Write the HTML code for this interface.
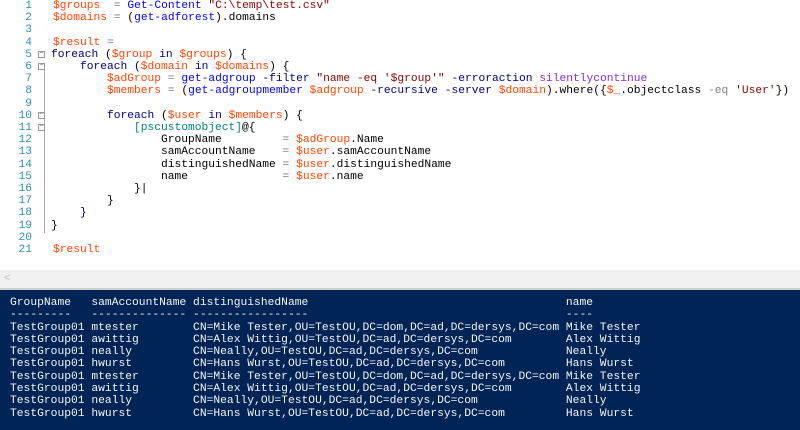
<!DOCTYPE html><html><head><style>
body{margin:0;width:800px;height:430px;overflow:hidden;background:#fff;font-family:"Liberation Mono",monospace;}
#ed{position:absolute;left:0;top:0;width:800px;height:268px;}
.l{position:absolute;left:0;height:12.2px;line-height:12.2px;font-size:11.25px;white-space:pre;}
.n{position:absolute;width:32px;text-align:right;color:#2b91af;}
.c{position:absolute;left:53px;color:#000;}
.v{color:#ff4500}.k{color:#00008b}.m{color:#0000ff}.s{color:#8b0000}.o{color:#808080}.t{color:#008080}.p{color:#000080}.a{color:#8a2be2}
#sb{position:absolute;left:0;top:270px;width:800px;height:18px;background:#f0f0f0;border-bottom:2px solid #cfcfcf;color:#c0c0c0;font:11px "Liberation Sans",sans-serif;}
#con{position:absolute;left:0;top:290px;width:800px;height:140px;background:#012456;color:#f5f5f5;font-size:11.3px;line-height:12.3px;white-space:pre;padding:7px 0 0 10px;box-sizing:border-box;}
.fold{position:absolute;left:38px;width:7px;height:7px;border:1px solid #999;box-sizing:border-box;font-size:7px;line-height:5px;text-align:center;color:#666;}
</style></head><body>
<div id="ed">
<div style="position:absolute;left:44px;top:66px;width:1px;height:167px;background:#aaa"></div>
<div class="l" style="top:0"><span class="n">1</span><span class="c"><span class="v">$groups</span>  <span class="o">=</span> <span class="m">Get-Content</span> <span class="s">"C:\temp\test.csv"</span></span></div>
<div class="l" style="top:12.2px"><span class="n">2</span><span class="c"><span class="v">$domains</span> <span class="o">=</span> (<span class="m">get-adforest</span>).domains</span></div>
<div class="l" style="top:24.4px"><span class="n">3</span></div>
<div class="l" style="top:36.6px"><span class="n">4</span><span class="c"><span class="v">$result</span> <span class="o">=</span></span></div>
<div class="l" style="top:48.8px"><span class="n">5</span><span class="c" style="left:51px"><span class="k">foreach</span> (<span class="v">$group</span> <span class="k">in</span> <span class="v">$groups</span>) {</span></div>
<div class="l" style="top:61px"><span class="n">6</span><span class="c">    <span class="k">foreach</span> (<span class="v">$domain</span> <span class="k">in</span> <span class="v">$domains</span>) {</span></div>
<div class="l" style="top:73.2px"><span class="n">7</span><span class="c">        <span class="v">$adGroup</span> <span class="o">=</span> <span class="m">get-adgroup</span> <span class="p">-filter</span> <span class="s">"name -eq '$group'"</span> <span class="p">-erroraction</span> <span class="a">silentlycontinue</span></span></div>
<div class="l" style="top:85.4px"><span class="n">8</span><span class="c">        <span class="v">$members</span> <span class="o">=</span> (<span class="m">get-adgroupmember</span> <span class="v">$adgroup</span> <span class="p">-recursive</span> <span class="p">-server</span> <span class="v">$domain</span>).where({<span class="v">$_</span>.objectclass <span class="o">-eq</span> <span class="s">'User'</span>})</span></div>
<div class="l" style="top:97.6px"><span class="n">9</span></div>
<div class="l" style="top:109.8px"><span class="n">10</span><span class="c">        <span class="k">foreach</span> (<span class="v">$user</span> <span class="k">in</span> <span class="v">$members</span>) {</span></div>
<div class="l" style="top:122px"><span class="n">11</span><span class="c">            <span class="t">[pscustomobject]</span>@{</span></div>
<div class="l" style="top:134.2px"><span class="n">12</span><span class="c">                GroupName         <span class="o">=</span> <span class="v">$adGroup</span>.Name</span></div>
<div class="l" style="top:146.4px"><span class="n">13</span><span class="c">                samAccountName    <span class="o">=</span> <span class="v">$user</span>.samAccountName</span></div>
<div class="l" style="top:158.6px"><span class="n">14</span><span class="c">                distinguishedName <span class="o">=</span> <span class="v">$user</span>.distinguishedName</span></div>
<div class="l" style="top:170.8px"><span class="n">15</span><span class="c">                name              <span class="o">=</span> <span class="v">$user</span>.name</span></div>
<div class="l" style="top:183px"><span class="n">16</span><span class="c">            }|</span></div>
<div class="l" style="top:195.2px"><span class="n">17</span><span class="c">        }</span></div>
<div class="l" style="top:207.4px"><span class="n">18</span><span class="c">    <span class="k">}</span></span></div>
<div class="l" style="top:219.6px"><span class="n">19</span><span class="c" style="left:51px">}</span></div>
<div class="l" style="top:231.8px"><span class="n">20</span></div>
<div class="l" style="top:244px"><span class="n">21</span><span class="c"><span class="v">$result</span></span></div>
<div class="fold" style="top:51px">−</div><div class="fold" style="top:63px">−</div><div class="fold" style="top:112px">−</div><div class="fold" style="top:124px">−</div>
</div>
<div id="sb"><span style="position:absolute;left:4px;top:2px">&lt;</span></div>
<div id="con">GroupName   samAccountName distinguishedName                                      name
---------   -------------- -----------------                                      ----
TestGroup01 mtester        CN=Mike Tester,OU=TestOU,DC=dom,DC=ad,DC=dersys,DC=com Mike Tester
TestGroup01 awittig        CN=Alex Wittig,OU=TestOU,DC=ad,DC=dersys,DC=com        Alex Wittig
TestGroup01 neally         CN=Neally,OU=TestOU,DC=ad,DC=dersys,DC=com             Neally
TestGroup01 hwurst         CN=Hans Wurst,OU=TestOU,DC=ad,DC=dersys,DC=com         Hans Wurst
TestGroup01 mtester        CN=Mike Tester,OU=TestOU,DC=dom,DC=ad,DC=dersys,DC=com Mike Tester
TestGroup01 awittig        CN=Alex Wittig,OU=TestOU,DC=ad,DC=dersys,DC=com        Alex Wittig
TestGroup01 neally         CN=Neally,OU=TestOU,DC=ad,DC=dersys,DC=com             Neally
TestGroup01 hwurst         CN=Hans Wurst,OU=TestOU,DC=ad,DC=dersys,DC=com         Hans Wurst</div>
</body></html>
